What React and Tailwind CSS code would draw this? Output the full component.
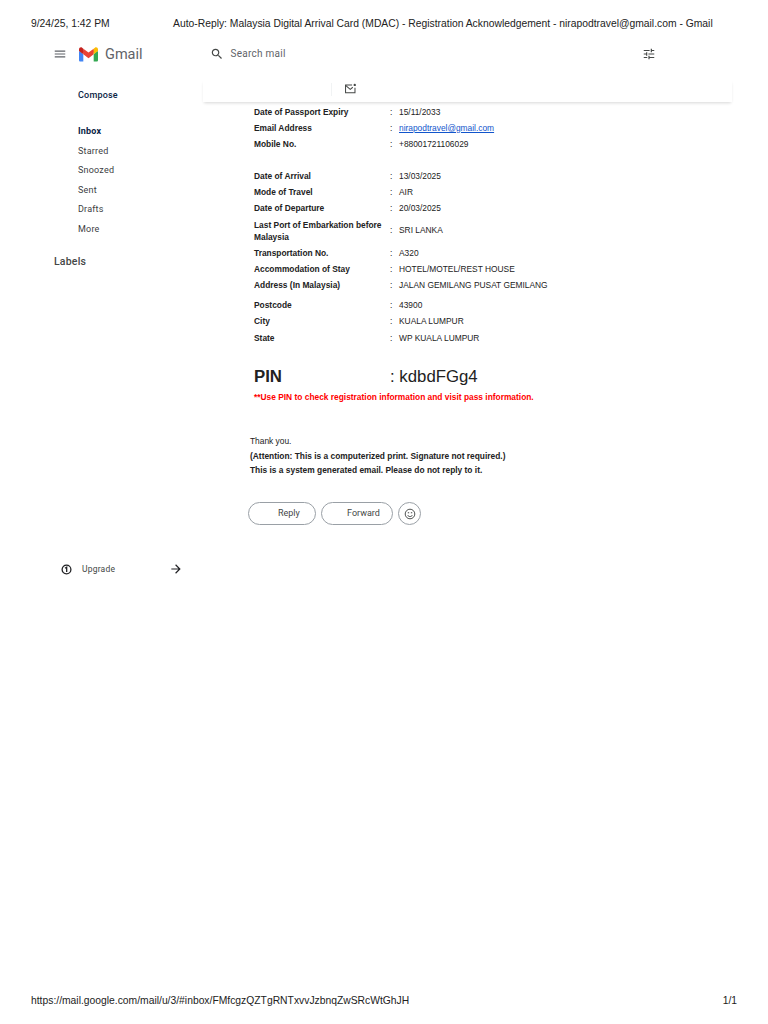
import { Fragment } from "react";

const sans = "font-['Liberation_Sans',Arial,sans-serif]";
const ui = "font-['Roboto',sans-serif]";

const navItems = [
  { label: "Starred", cls: "mt-[9px]" },
  { label: "Snoozed", cls: "mt-[9px]" },
  { label: "Sent", cls: "mt-[10px]" },
  { label: "Drafts", cls: "mt-[9px]" },
  { label: "More", cls: "mt-[10px]" },
];

const rows = [
  { label: "Date of Passport Expiry", value: "15/11/2033" },
  { label: "Email Address", value: "nirapodtravel@gmail.com", link: true },
  { label: "Mobile No.", value: "+88001721106029" },
  { label: "Date of Arrival", value: "13/03/2025", cls: "mt-[16px]" },
  { label: "Mode of Travel", value: "AIR" },
  { label: "Date of Departure", value: "20/03/2025" },
  { label: "Last Port of Embarkation before Malaysia", value: "SRI LANKA", cls: "h-[27px] mt-[1px]" },
  { label: "Transportation No.", value: "A320", cls: "mt-[1px]" },
  { label: "Accommodation of Stay", value: "HOTEL/MOTEL/REST HOUSE" },
  { label: "Address (In Malaysia)", value: "JALAN GEMILANG PUSAT GEMILANG" },
  { label: "Postcode", value: "43900", cls: "mt-[4px]" },
  { label: "City", value: "KUALA LUMPUR" },
  { label: "State", value: "WP KUALA LUMPUR", cls: "mt-[1px]" },
];

function MaterialIcon({ d, className }) {
  return (
    <svg viewBox="0 0 24 24" className={className} fill="currentColor">
      <path d={d} />
    </svg>
  );
}

function GmailLogo() {
  return (
    <svg viewBox="0 0 256 193" className="w-[19px] h-[15px]">
      <path fill="#4285F4" d="M58.182 192.05V93.14L27.507 65.077 0 49.504v125.091c0 9.658 7.825 17.455 17.455 17.455h40.727z" />
      <path fill="#34A853" d="M197.818 192.05h40.727c9.659 0 17.455-7.826 17.455-17.455V49.505l-31.156 17.837-27.026 25.798v98.91z" />
      <path fill="#EA4335" d="M58.182 93.14l-4.174-38.647 4.174-36.989L128 69.868l69.818-52.364 4.669 34.992-4.669 40.644L128 145.504z" />
      <path fill="#FBBC04" d="M197.818 17.504V93.14L256 49.504V26.231c0-21.585-24.64-33.89-41.89-20.945l-16.292 12.218z" />
      <path fill="#C5221F" d="M0 49.504l26.759 20.07L58.182 93.14V17.504L41.89 5.286C24.61-7.66 0 4.646 0 26.23v23.273z" />
    </svg>
  );
}

function Sidebar() {
  return (
    <aside className={`w-[203px] shrink-0 flex flex-col text-[9px] tracking-[0.2px] text-[#3c4043] ${ui}`}>
      <div className="pl-[78px] pt-[9px] leading-[12px] font-medium text-[#0b2545]">Compose</div>
      <div className="pl-[78px] mt-[24px] leading-[12px] font-bold text-[#0b2545]">Inbox</div>
      {navItems.map((item) => (
        <div key={item.label} className={`pl-[78px] leading-[10px] ${item.cls}`}>{item.label}</div>
      ))}
      <div className="pl-[54px] mt-[21px] text-[10.5px] leading-[14px] font-medium text-[#444746]">Labels</div>
      <div className="pl-[61px] mt-[293px] flex items-center h-[14px]">
        <svg viewBox="0 0 12 12" className="w-[11px] h-[11px] text-[#202124]" fill="none" stroke="currentColor" strokeWidth="1.4">
          <circle cx="6" cy="6" r="4.8" />
          <path d="M4.4 4.6 6.2 3.4V8.8" />
        </svg>
        <span className="ml-[10px] w-[87px] text-[8.5px] text-[#444746]">Upgrade</span>
        <MaterialIcon d="M12 4l-1.41 1.41L16.17 11H4v2h12.17l-5.58 5.59L12 20l8-8z" className="w-[14px] h-[14px] text-[#202124]" />
      </div>
    </aside>
  );
}

function DetailRows() {
  return (
    <div className={`pl-[51px] grid grid-cols-[136px_9px_1fr] text-[8.4px] text-[#222222] ${sans}`}>
      {rows.map((row) => (
        <Fragment key={row.label}>
          <div className={`h-[16px] flex items-center font-bold leading-[12px] ${row.cls || ""}`}>{row.label}</div>
          <div className={`h-[16px] flex items-center ${row.cls || ""}`}>:</div>
          <div className={`h-[16px] flex items-center ${row.cls || ""}`}>
            {row.link ? <span className="text-[#1155cc] underline">{row.value}</span> : row.value}
          </div>
        </Fragment>
      ))}
    </div>
  );
}

function Message() {
  return (
    <main className="flex-1 min-w-0">
      <div className="w-[529px] h-[22px] flex items-start pt-[3px] pl-[128px] shadow-[0_2px_3px_-1px_rgba(0,0,0,0.16)]">
        <div className="w-px h-[13px] bg-[#f1f3f4]" />
        <svg viewBox="0 0 16 14" className="ml-[12px] w-[13px] h-[11px] text-[#444746]" fill="none" stroke="currentColor" strokeWidth="1.3">
          <path d="M10 2.5H1.7v10h12V6" />
          <path d="M1.7 3 7.7 8l3.2-2.6" />
          <circle cx="13.4" cy="2.4" r="1.5" fill="currentColor" stroke="none" />
        </svg>
      </div>
      <div className="pt-[2px]">
        <DetailRows />
      </div>
      <div className={`pl-[51px] mt-[21px] grid grid-cols-[136px_1fr] items-center text-[#222222] ${sans}`}>
        <div className="text-[16.8px] leading-[20px] font-bold">PIN</div>
        <div className="text-[16.8px] leading-[20px]">: kdbdFGg4</div>
      </div>
      <div className={`pl-[51px] mt-[4px] text-[8.4px] leading-[12px] font-bold text-[#ff0000] ${sans}`}>
        **Use PIN to check registration information and visit pass information.
      </div>
      <div className={`pl-[47px] mt-[32px] text-[8.4px] text-[#222222] ${sans}`}>
        <div className="leading-[12px]">Thank you.</div>
        <div className="mt-[3px] leading-[12px] font-bold">(Attention: This is a computerized print. Signature not required.)</div>
        <div className="mt-[2px] leading-[12px] font-bold">This is a system generated email. Please do not reply to it.</div>
      </div>
      <div className={`pl-[45px] mt-[26px] flex items-center gap-[5px] text-[9px] text-[#444746] ${ui}`}>
        <div className="w-[68px] h-[23px] rounded-full border border-[#9aa0a6] flex items-center pl-[29px]">Reply</div>
        <div className="w-[72px] h-[23px] rounded-full border border-[#9aa0a6] flex items-center pl-[25px]">Forward</div>
        <div className="w-[23px] h-[23px] rounded-full border border-[#9aa0a6] flex items-center justify-center">
          <svg viewBox="0 0 14 14" className="w-[12px] h-[12px] text-[#444746]" fill="none" stroke="currentColor" strokeWidth="1.1">
            <circle cx="7" cy="7" r="5.6" />
            <path d="M4.2 8.2c.6 1.2 1.6 1.8 2.8 1.8s2.2-.6 2.8-1.8" />
            <path d="M4.4 5.6h1.6M8 5.6h1.6" strokeWidth="1.3" />
          </svg>
        </div>
      </div>
    </main>
  );
}

export default function App() {
  return (
    <div className="w-[768px] h-[1024px] bg-white flex flex-col overflow-hidden">
      <div className={`h-[47px] shrink-0 pl-[31px] pt-[17px] flex text-[10.33px] leading-[13px] text-[#222222] ${sans}`}>
        <span className="w-[142px]">9/24/25, 1:42 PM</span>
        <span>Auto-Reply: Malaysia Digital Arrival Card (MDAC) - Registration Acknowledgement - nirapodtravel@gmail.com - Gmail</span>
      </div>

      <div className="h-[33px] shrink-0 flex items-start pl-[53px]">
        <MaterialIcon d="M3 18h18v-2H3v2zm0-5h18v-2H3v2zm0-7v2h18V6H3z" className="w-[14px] h-[14px] text-[#5f6368]" />
        <div className="ml-[12px]"><GmailLogo /></div>
        <span className={`ml-[7px] text-[14.5px] leading-[15px] text-[#5f6368] ${ui}`}>Gmail</span>
        <MaterialIcon d="M15.5 14h-.79l-.28-.27C15.41 12.59 16 11.11 16 9.5 16 5.91 13.09 3 9.5 3S3 5.91 3 9.5 5.91 16 9.5 16c1.61 0 3.09-.59 4.23-1.57l.27.28v.79l5 4.99L20.49 19l-4.99-5zm-6 0C7.01 14 5 11.99 5 9.5S7.01 5 9.5 5 14 7.01 14 9.5 11.99 14 9.5 14z" className="ml-[67px] w-[14px] h-[14px] text-[#444746]" />
        <span className={`ml-[7px] text-[10px] leading-[14px] tracking-[0.25px] text-[#5f6368] ${ui}`}>Search mail</span>
        <MaterialIcon d="M3 17v2h6v-2H3zM3 5v2h10V5H3zm10 16v-2h8v-2h-8v-2h-2v6h2zM7 9v2H3v2h4v2h2V9H7zm14 4v-2H11v2h10zm-6-4h2V7h4V5h-4V3h-2v6z" className="ml-[356px] w-[14px] h-[14px] text-[#444746]" />
      </div>

      <div className="flex flex-1 min-h-0">
        <Sidebar />
        <Message />
      </div>

      <div className={`h-[37px] shrink-0 pt-[7px] px-[31px] flex justify-between text-[10.33px] leading-[13px] text-[#222222] ${sans}`}>
        <span>https://mail.google.com/mail/u/3/#inbox/FMfcgzQZTgRNTxvvJzbnqZwSRcWtGhJH</span>
        <span>1/1</span>
      </div>
    </div>
  );
}
